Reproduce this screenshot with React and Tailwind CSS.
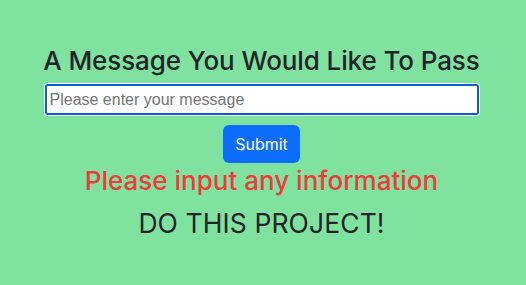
import React, { useState } from "react";

export default function App() {
  const [message, setMessage] = useState("");

  return (
    <main
      className="min-h-screen w-full bg-[#80e29f] flex flex-col items-center pt-[45px] pr-[3px] text-[#212529]"
      style={{ fontFamily: "Inter, 'Liberation Sans', Arial, sans-serif" }}
    >
      {/* title */}
      <h1 className="text-[26px] leading-[31px] font-medium tracking-[-0.1px]">
        A Message You Would Like To Pass
      </h1>

      {/* input */}
      <input
        type="text"
        value={message}
        onChange={(e) => setMessage(e.target.value)}
        placeholder="Please enter your message"
        className="mt-[8px] w-[434px] h-[31px] bg-white border-2 border-[#0b5fd3] rounded-[3px] ring-1 ring-white px-[3px] text-[16px] text-[#212529] placeholder:text-[#757575] outline-none"
        style={{ fontFamily: "'Liberation Sans', Arial, sans-serif" }}
      />

      <button className="mt-[10px] h-[38px] px-[12px] rounded-[6px] bg-[#0d6efd] text-white text-[16px] leading-[24px]">
        Submit
      </button>

      {/* messages */}
      <p className="mt-[3px] text-[26px] leading-[30px] font-medium text-[#ee3b3b]">
        Please input any information
      </p>
      <p className="mt-[12px] text-[26.5px] leading-[30px] text-[#212529] tracking-[0.1px]">
        DO THIS PROJECT!
      </p>
    </main>
  );
}
